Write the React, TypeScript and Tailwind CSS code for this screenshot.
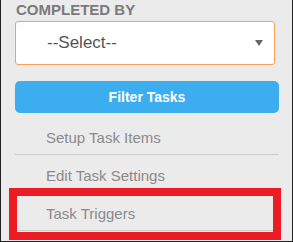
export default function App() {
  const items = ['Setup Task Items', 'Edit Task Settings', 'Task Triggers'];

  return (
    <div
      className="relative w-[293px] h-[242px] overflow-hidden bg-[#ebebeb] border-l border-r border-b border-[#222]"
      style={{ fontFamily: '"Liberation Sans", Arial, sans-serif' }}
    >
      <div className="pl-[14px] pr-[13px] pt-[1px]">
        {/* Completed by filter */}
        <div className="text-[15px] leading-[17px] font-bold uppercase text-[#7a7a7a] pl-[1px]">
          Completed By
        </div>
        <div className="mt-[3px] mr-[4px] h-[44px] flex items-center justify-between rounded-[3px] border border-[#f5a25d] bg-white pl-[31px] pr-[11px]">
          <span className="text-[17px] text-[#555]">--Select--</span>
          <svg width="8" height="6" viewBox="0 0 8 6" className="text-[#666]">
            <path d="M0 0h8L4 6z" fill="currentColor" />
          </svg>
        </div>

        <button className="mt-[16px] w-full h-[32px] rounded-[5px] bg-[#3caef0] text-white text-[14px] font-bold">
          Filter Tasks
        </button>

        {/* Menu links */}
        <ul className="mt-[4px]">
          {items.map((item) => (
            <li
              key={item}
              className="h-[38px] border-b border-[#cccccc] pl-[31px] pt-[11px] text-[15px] leading-[20px] text-[#8a8a8a]"
            >
              {item}
            </li>
          ))}
        </ul>
      </div>

      {/* Highlight annotation */}
      <div className="absolute left-[8px] top-[188px] w-[272px] h-[52px] border-[8px] border-[#ed1c24]" />
    </div>
  );
}
